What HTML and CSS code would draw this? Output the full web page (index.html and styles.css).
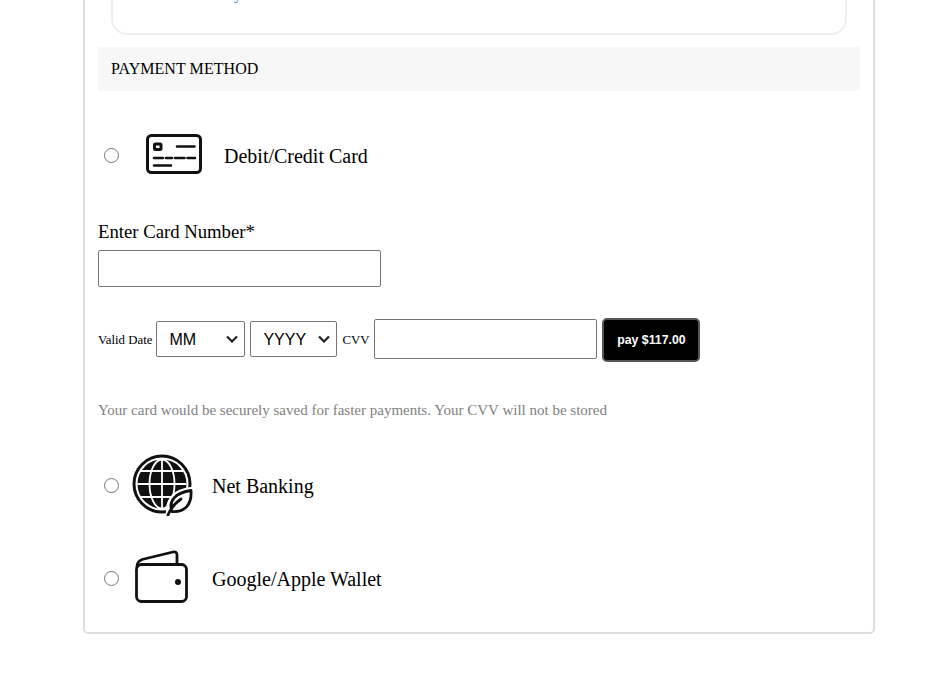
FILE: index.html
```html
<!DOCTYPE html>
<html lang="en">
<head>
<meta charset="utf-8">
<title>Payment method</title>
<link rel="stylesheet" href="styles.css">
</head>
<body>
<main class="card">
  <section class="summary"><a class="summary-link" href="#">y</a></section>
  <h2 class="section-title">PAYMENT METHOD</h2>

  <label class="method method-card">
    <input type="radio" name="pay" class="radio">
    <svg class="icon icon-card" viewBox="0 0 60 44" width="60" height="44" fill="none" stroke="#111" stroke-width="3" stroke-linecap="round" stroke-linejoin="round">
      <rect x="3.500" y="3.500" width="53" height="37" rx="4"/>
      <rect x="10.500" y="12" width="6.500" height="5.500" rx="1"/>
      <path d="M33 14.500h17.500M10 26h9M22 26h6M31 26h9.500M43.500 26h7.500M10 33.500h17" stroke-width="2.600"/>
    </svg>
    <span class="method-label">Debit/Credit Card</span>
  </label>

  <label class="field-label" for="card">Enter Card Number*</label>
  <input id="card" class="card-number" type="text">

  <div class="date-row">
    <span class="small">Valid Date</span>
    <select class="sel sel-mm"><option>MM</option></select>
    <select class="sel sel-yy"><option>YYYY</option></select>
    <span class="small">CVV</span>
    <input class="cvv" type="text">
    <button class="pay" type="button">pay $117.00</button>
  </div>

  <p class="note">Your card would be securely saved for faster payments. Your CVV will not be stored</p>

  <label class="method method-net">
    <input type="radio" name="pay" class="radio">
    <svg class="icon icon-globe" viewBox="0 0 62 62" width="62" height="62">
      <circle cx="30" cy="30" r="28" fill="none" stroke="#111" stroke-width="3"/>
      <circle cx="30" cy="30" r="24.500" fill="#111"/>
      <g fill="none" stroke="#fff" stroke-width="1.800">
        <ellipse cx="30" cy="30" rx="12.500" ry="24.500"/>
        <path d="M30 5v50M5.500 30h49M9 17h42M9 43h42"/>
      </g>
      <path d="M37 60c-1-14 6-22 22-24 1 14-5 22-19 22z" fill="#fff" stroke="#fff" stroke-width="6" stroke-linejoin="round"/>
      <path d="M40 57.500c-4-11 4-19 19-21 1 14-6 22-19 21zM36 61c3-7 7-12 13-16" fill="#fff" stroke="#111" stroke-width="2.800" stroke-linejoin="round" stroke-linecap="round"/>
    </svg>
    <span class="method-label">Net Banking</span>
  </label>

  <label class="method method-wallet">
    <input type="radio" name="pay" class="radio">
    <svg class="icon icon-wallet" viewBox="0 0 60 60" width="60" height="60" fill="none" stroke="#111" stroke-width="2.800" stroke-linecap="round" stroke-linejoin="round">
      <rect x="4.500" y="17.500" width="50" height="37" rx="5"/>
      <path d="M5 20c0-4 1-6 5-7.500L41 5c2.500-.6 4 .5 4 3v9"/>
      <circle cx="46" cy="35" r="3" fill="#111" stroke="none"/>
    </svg>
    <span class="method-label">Google/Apple Wallet</span>
  </label>
</main>
</body>
</html>
```
FILE: styles.css
```css
html, body {
  margin: 0;
  padding: 0;
  height: 687px;
  overflow: hidden;
  background: #fff;
}
body {
  font-family: "Liberation Serif", "Times New Roman", serif;
  color: #000;
}
.card {
  box-sizing: border-box;
  width: 792px;
  height: 734px;
  margin: -100px 0 0 83px;
  padding: 0 13px;
  border: 2px solid #ddd;
  border-radius: 5px;
}
.summary {
  box-sizing: border-box;
  height: 133px;
  margin: 0 13px 0 13px;
  border: 2px solid #eee;
  border-top: 0;
  border-radius: 0 0 16px 16px;
  padding: 83px 0 0 121px;
  font-size: 16px;
  line-height: 18px;
}
.summary-link {
  color: #3b82d6;
  text-decoration: none;
}
.section-title {
  box-sizing: border-box;
  height: 44px;
  margin: 12px 0 0;
  padding: 0 13px;
  background: #f7f7f7;
  font-size: 16px;
  font-weight: 400;
  letter-spacing: 0.06px;
  line-height: 44px;
}
.method {
  display: flex;
  align-items: center;
}
.radio {
  width: 15px;
  height: 15px;
  margin: 0;
  flex: none;
  accent-color: #000;
}
.method-label {
  margin-top: 2px;
  font-size: 20px;
  line-height: 24px;
}
.method-card {
  margin-top: 42px;
  height: 44px;
  padding-left: 6px;
}
.icon-card {
  margin: 0 0 3px 25px;
}
.method-card .method-label {
  margin-left: 20px;
}
.field-label {
  display: block;
  margin-top: 43px;
  font-size: 18.720px;
  line-height: 24px;
}
.card-number {
  display: block;
  box-sizing: border-box;
  width: 283px;
  height: 37px;
  margin: 6px 0 0;
  border: 1px solid #767676;
  border-radius: 2px;
  background: #fff;
}
.date-row {
  display: flex;
  align-items: center;
  margin-top: 31px;
  height: 44px;
}
.small {
  font-size: 12.800px;
}
.sel {
  box-sizing: border-box;
  height: 36px;
  margin: 0 0 2px 4px;
  padding: 0 24px 0 12px;
  border: 1px solid #767676;
  border-radius: 2px;
  appearance: none;
  background-color: #fff;
  background-image: url("data:image/svg+xml,%3Csvg xmlns='http://www.w3.org/2000/svg' width='12' height='8' fill='none' stroke='%23222' stroke-width='2.200'%3E%3Cpath d='M1 1.500l5 5 5-5'/%3E%3C/svg%3E");
  background-repeat: no-repeat;
  background-position: right 6px center;
  color: #000;
  font-family: "Liberation Sans", Arial, sans-serif;
  font-size: 16px;
}
.sel-mm {
  width: 89px;
}
.sel-yy {
  width: 87px;
  margin-left: 5px;
  margin-right: 5px;
}
.cvv {
  box-sizing: border-box;
  width: 223px;
  height: 40px;
  margin: 0 0 2px 5px;
  border: 1px solid #767676;
  border-radius: 2px;
  background: #fff;
}
.pay {
  box-sizing: border-box;
  width: 98px;
  height: 44px;
  margin-left: 5px;
  border: 2px solid #555;
  border-radius: 5px;
  background: #000;
  color: #fff;
  font-family: "Liberation Sans", Arial, sans-serif;
  font-size: 12.300px;
  font-weight: 700;
}
.note {
  margin: 39px 0 0;
  font-size: 15px;
  line-height: 18px;
  color: #808080;
}
.method-net {
  margin-top: 35px;
  height: 62px;
  padding-left: 6px;
}
.icon-globe {
  margin-left: 13px;
}
.method-net .method-label {
  margin-left: 18px;
}
.method-wallet {
  margin-top: 32px;
  height: 60px;
  padding-left: 6px;
}
.icon-wallet {
  margin: 0 0 2px 13px;
}
.method-wallet .method-label {
  margin-left: 20px;
}
```
